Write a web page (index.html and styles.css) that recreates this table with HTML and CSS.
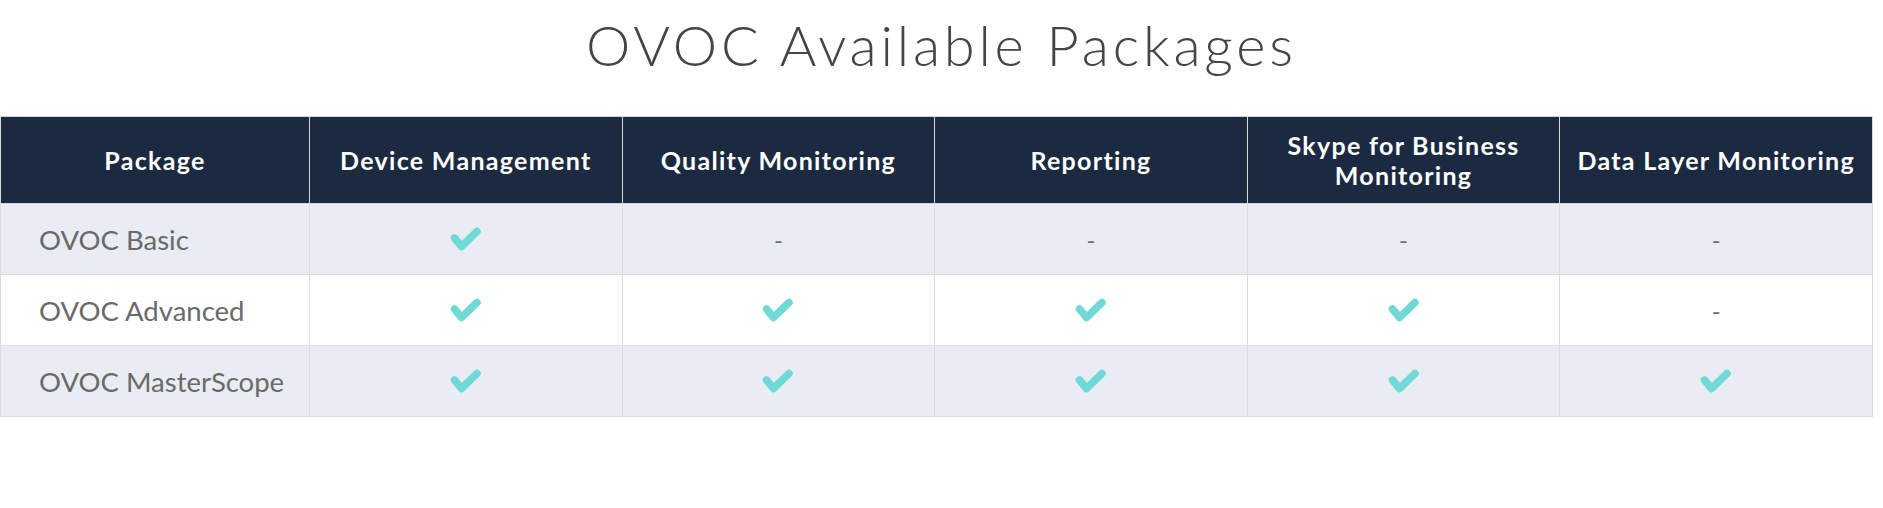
FILE: index.html
```html
<!DOCTYPE html>
<html lang="en">
<head>
<meta charset="utf-8">
<title>OVOC Available Packages</title>
<link rel="stylesheet" href="styles.css">
</head>
<body>
<h1 class="title">OVOC Available Packages</h1>
<table class="packages">
  <thead>
    <tr class="head-row">
      <th class="col-first">Package</th>
      <th>Device Management</th>
      <th>Quality Monitoring</th>
      <th>Reporting</th>
      <th>Skype for Business<br>Monitoring</th>
      <th>Data Layer Monitoring</th>
    </tr>
  </thead>
  <tbody>
    <tr class="row alt">
      <td class="name">OVOC Basic</td>
      <td class="mark"><svg class="check" viewBox="0 0 32 26"><polyline points="4.5,12 11.5,20.5 27,5.5"/></svg></td>
      <td class="mark dash">-</td>
      <td class="mark dash">-</td>
      <td class="mark dash">-</td>
      <td class="mark dash">-</td>
    </tr>
    <tr class="row">
      <td class="name">OVOC Advanced</td>
      <td class="mark"><svg class="check" viewBox="0 0 32 26"><polyline points="4.5,12 11.5,20.5 27,5.5"/></svg></td>
      <td class="mark"><svg class="check" viewBox="0 0 32 26"><polyline points="4.5,12 11.5,20.5 27,5.5"/></svg></td>
      <td class="mark"><svg class="check" viewBox="0 0 32 26"><polyline points="4.5,12 11.5,20.5 27,5.5"/></svg></td>
      <td class="mark"><svg class="check" viewBox="0 0 32 26"><polyline points="4.5,12 11.5,20.5 27,5.5"/></svg></td>
      <td class="mark dash">-</td>
    </tr>
    <tr class="row alt">
      <td class="name">OVOC MasterScope</td>
      <td class="mark"><svg class="check" viewBox="0 0 32 26"><polyline points="4.5,12 11.5,20.5 27,5.5"/></svg></td>
      <td class="mark"><svg class="check" viewBox="0 0 32 26"><polyline points="4.5,12 11.5,20.5 27,5.5"/></svg></td>
      <td class="mark"><svg class="check" viewBox="0 0 32 26"><polyline points="4.5,12 11.5,20.5 27,5.5"/></svg></td>
      <td class="mark"><svg class="check" viewBox="0 0 32 26"><polyline points="4.5,12 11.5,20.5 27,5.5"/></svg></td>
      <td class="mark"><svg class="check" viewBox="0 0 32 26"><polyline points="4.5,12 11.5,20.5 27,5.5"/></svg></td>
    </tr>
  </tbody>
</table>
</body>
</html>
```

FILE: styles.css
```css
html, body {
  margin: 0;
  padding: 0;
  background: #ffffff;
}

body {
  font-family: Lato, "Liberation Sans", sans-serif;
}

.title {
  margin: 17px 0 43px;
  font-size: 56px;
  line-height: 56px;
  font-weight: 300;
  letter-spacing: 3.8px;
  color: #454545;
  text-align: center;
}

.packages {
  width: 1873px;
  border-collapse: collapse;
  table-layout: fixed;
  border: 1px solid #dcdcdc;
}

.packages th,
.packages td {
  border: 1px solid #dcdcdc;
  padding: 0;
}

.head-row {
  height: 87px;
  background: #1c2a41;
}

.packages th {
  color: #ffffff;
  font-weight: 700;
  font-size: 25px;
  line-height: 30px;
  letter-spacing: 1.3px;
  text-align: center;
  vertical-align: middle;
  border-color: #d8d8d8;
}

.col-first {
  width: 308px;
}

.row {
  height: 71px;
  background: #ffffff;
}

.row.alt {
  background: #e9ecf3;
}

.name {
  padding-left: 38px !important;
  font-size: 27.5px;
  color: #6a6a6a;
  text-align: left;
  vertical-align: middle;
}

.mark {
  text-align: center;
  vertical-align: middle;
}

.dash {
  font-size: 24px;
  color: #707070;
}

.check {
  display: block;
  margin: 0 auto;
  width: 32px;
  height: 26px;
}

.check polyline {
  fill: none;
  stroke: #6fd9d6;
  stroke-width: 7.5;
  stroke-linecap: round;
  stroke-linejoin: round;
}
```
